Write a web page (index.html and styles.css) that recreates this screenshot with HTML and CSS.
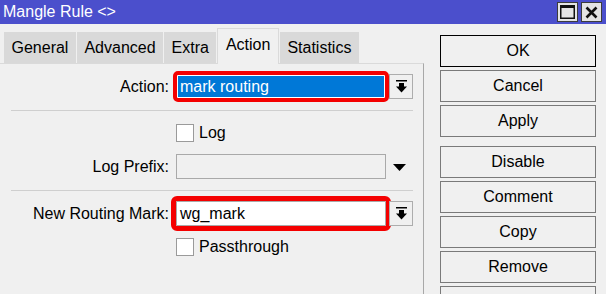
FILE: index.html
```html
<!DOCTYPE html>
<html>
<head>
<meta charset="utf-8">
<link rel="stylesheet" href="styles.css">
</head>
<body>
<div class="window">
  <div class="titlebar">
    <span class="title">Mangle Rule &lt;&gt;</span>
    <div class="wbtns">
      <span class="wbtn"><svg width="15" height="14" viewBox="0 0 15 14"><rect x="0.75" y="0.75" width="13.5" height="12.5" fill="none" stroke="#111" stroke-width="1.5"/><rect x="0" y="0" width="15" height="3" fill="#111"/></svg></span>
      <span class="wbtn"><svg width="13" height="13" viewBox="0 0 13 13"><path d="M1.5 1.5L11.5 11.5M11.5 1.5L1.5 11.5" stroke="#111" stroke-width="2.6"/></svg></span>
    </div>
  </div>
  <div class="main">
    <div class="left">
      <div class="tabs">
        <div class="tab">General</div>
        <div class="tab">Advanced</div>
        <div class="tab">Extra</div>
        <div class="tab active">Action</div>
        <div class="tab">Statistics</div>
      </div>
      <div class="panel">
        <div class="row">
          <label class="lbl">Action:</label>
          <div class="field sel hl1">mark routing</div>
          <div class="ddbtn"><svg width="11" height="13" viewBox="0 0 11 13"><rect x="0" y="0" width="11" height="1.5" fill="#000"/><rect x="3" y="3" width="5" height="4" fill="#000"/><polygon points="0,6.5 11,6.5 5.5,12.5" fill="#000"/></svg></div>
        </div>
        <div class="sep s1"></div>
        <div class="crow c1"><span class="cb"></span><span>Log</span></div>
        <div class="row r2">
          <label class="lbl">Log Prefix:</label>
          <div class="field dis"></div>
          <div class="ddtri"><svg width="13" height="7" viewBox="0 0 13 7"><polygon points="0,0 13,0 6.5,7" fill="#000"/></svg></div>
        </div>
        <div class="sep s2"></div>
        <div class="row">
          <label class="lbl">New Routing Mark:</label>
          <div class="field hl2">wg_mark</div>
          <div class="ddbtn"><svg width="11" height="13" viewBox="0 0 11 13"><rect x="0" y="0" width="11" height="1.5" fill="#000"/><rect x="3" y="3" width="5" height="4" fill="#000"/><polygon points="0,6.5 11,6.5 5.5,12.5" fill="#000"/></svg></div>
        </div>
        <div class="crow c2"><span class="cb"></span><span>Passthrough</span></div>
      </div>
    </div>
    <div class="actions">
      <div class="btn ok">OK</div>
      <div class="btn">Cancel</div>
      <div class="btn">Apply</div>
      <div class="btn gapped">Disable</div>
      <div class="btn">Comment</div>
      <div class="btn">Copy</div>
      <div class="btn">Remove</div>
      <div class="btn"></div>
    </div>
  </div>
</div>
</body>
</html>
```
FILE: styles.css
```css
html, body {
  margin: 0;
  padding: 0;
}
body {
  background: #f0f0f0;
  font-family: "Liberation Sans", Arial, sans-serif;
  font-size: 16px;
  color: #000;
  overflow: hidden;
}
.window {
  width: 606px;
  height: 294px;
  display: flex;
  flex-direction: column;
  overflow: hidden;
}
.titlebar {
  height: 24px;
  flex: none;
  background: #4b4fcc;
  color: #fff;
  display: flex;
  align-items: center;
  justify-content: space-between;
  padding: 0 4px 0 3px;
}
.title {
  line-height: 24px;
}
.wbtns {
  display: flex;
  gap: 3px;
}
.wbtn {
  width: 21px;
  height: 20px;
  box-sizing: border-box;
  border: 1px solid #3c3c3c;
  background: #e4e4e4;
  display: flex;
  align-items: center;
  justify-content: center;
}
.main {
  flex: 1;
  display: flex;
  min-height: 0;
}
.left {
  width: 424px;
  display: flex;
  flex-direction: column;
}
.tabs {
  height: 39px;
  flex: none;
  box-sizing: border-box;
  display: flex;
  align-items: flex-end;
  gap: 1px;
  padding-left: 4px;
}
.tab {
  height: 31px;
  padding: 0 7.5px;
  background: #d9d9d9;
  display: flex;
  align-items: center;
}
.tab.active {
  height: 36px;
  box-sizing: border-box;
  background: #f0f0f0;
  border: 1px solid #dadada;
  border-bottom: none;
  margin-bottom: -1px;
  position: relative;
  z-index: 1;
  padding-bottom: 3px;
}
.panel {
  flex: 1;
  border-top: 1px solid #dadada;
  border-right: 1px solid #a8a8a8;
  padding-top: 10px;
  display: flex;
  flex-direction: column;
}
.row {
  display: flex;
  align-items: center;
  height: 25px;
  flex: none;
}
.lbl {
  width: 169px;
  text-align: right;
}
.field {
  width: 210px;
  height: 25px;
  margin-left: 7px;
  box-sizing: border-box;
  border: 1px solid #a9a9a9;
  background: #fff;
  padding-left: 3px;
  display: flex;
  align-items: center;
  white-space: nowrap;
}
.field.sel {
  background: #0078d7;
  color: #fff;
  border: 2px solid #fff;
  padding-left: 2px;
}
.field.dis {
  background: #f0f0f0;
}
.hl1 {
  outline: 4px solid #f40000;
  outline-offset: -1px;
  border-radius: 2px;
}
.hl2 {
  outline: 5px solid #f40000;
  outline-offset: 0;
  border-radius: 1px;
}
.ddbtn, .ddtri {
  width: 24px;
  height: 25px;
  margin-left: 3px;
  box-sizing: border-box;
  display: flex;
  align-items: center;
  justify-content: center;
}
.ddbtn {
  border: 1px solid #adadad;
  background: #f0f0f0;
}
.ddtri {
  padding-top: 2px;
  padding-right: 3px;
}
.sep {
  height: 1px;
  flex: none;
  background: #cfcfcf;
  margin-left: 11px;
  margin-right: 10px;
}
.s1 {
  margin-top: 11px;
  margin-bottom: 13px;
}
.s2 {
  margin-top: 11px;
  margin-bottom: 10px;
}
.crow {
  display: flex;
  align-items: center;
  height: 18px;
  flex: none;
  padding-left: 176px;
  gap: 5px;
}
.c1 {
  margin-bottom: 12px;
}
.c2 {
  margin-top: 12px;
}
.cb {
  width: 18px;
  height: 18px;
  box-sizing: border-box;
  border: 1px solid #9a9a9a;
  background: #fff;
}
.actions {
  width: 156px;
  padding: 11px 0 0 16px;
  display: flex;
  flex-direction: column;
  gap: 3px;
}
.btn {
  height: 32px;
  flex: none;
  box-sizing: border-box;
  border: 1px solid #7a7a7a;
  background: #f0f0f0;
  display: flex;
  align-items: center;
  justify-content: center;
}
.btn.ok {
  border-color: #000;
}
.btn.gapped {
  margin-top: 6px;
}
```
